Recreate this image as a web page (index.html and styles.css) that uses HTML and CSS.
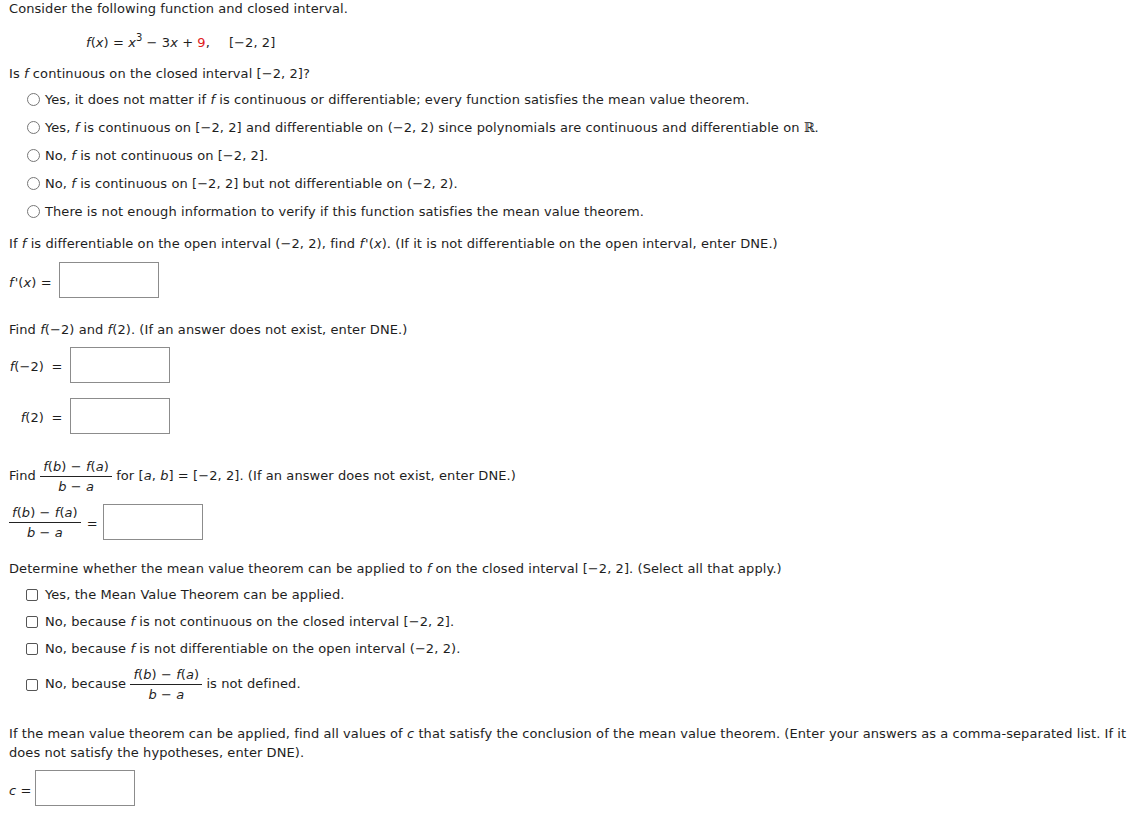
FILE: index.html
```html
<!DOCTYPE html>
<html>
<head>
<meta charset="utf-8">
<link rel="stylesheet" href="styles.css">
</head>
<body>
<div class="page">
  <p class="intro">Consider the following function and closed interval.</p>
  <p class="func"><i>f</i>(<i>x</i>) = <i>x</i><sup>3</sup> − 3<i>x</i> + <span class="red">9</span>,<span class="sp"></span>[−2, 2]</p>
  <p class="q1">Is <i>f</i> continuous on the closed interval [−2, 2]?</p>
  <ul class="choices radios">
    <li><span class="radio"></span>Yes, it does not matter if <i>f</i> is continuous or differentiable; every function satisfies the mean value theorem.</li>
    <li><span class="radio"></span>Yes, <i>f</i> is continuous on [−2, 2] and differentiable on (−2, 2) since polynomials are continuous and differentiable on <span class="bb">ℝ</span>.</li>
    <li><span class="radio"></span>No, <i>f</i> is not continuous on [−2, 2].</li>
    <li><span class="radio"></span>No, <i>f</i> is continuous on [−2, 2] but not differentiable on (−2, 2).</li>
    <li><span class="radio"></span>There is not enough information to verify if this function satisfies the mean value theorem.</li>
  </ul>
  <p class="q2">If <i>f</i> is differentiable on the open interval (−2, 2), find <i>f</i><span class="pr">'</span>(<i>x</i>). (If it is not differentiable on the open interval, enter DNE.)</p>
  <div class="answer a-deriv">
    <span class="lbl"><i>f</i><span class="pr">'</span>(<i>x</i>) =</span>
    <span class="box"></span>
  </div>
  <p class="q3">Find <i>f</i>(−2) and <i>f</i>(2). (If an answer does not exist, enter DNE.)</p>
  <div class="pair">
    <span class="plbl"><i>f</i>(−2)</span><span class="peq">=</span><span class="box"></span>
    <span class="plbl"><i>f</i>(2)</span><span class="peq">=</span><span class="box"></span>
  </div>
  <p class="q4">Find <span class="frac"><span class="num"><i>f</i>(<i>b</i>) − <i>f</i>(<i>a</i>)</span><span class="den"><i>b</i> − <i>a</i></span></span> for [<i>a</i>, <i>b</i>] = [−2, 2]. (If an answer does not exist, enter DNE.)</p>
  <div class="answer a-frac">
    <span class="frac"><span class="num"><i>f</i>(<i>b</i>) − <i>f</i>(<i>a</i>)</span><span class="den"><i>b</i> − <i>a</i></span></span>
    <span class="eq">=</span>
    <span class="box"></span>
  </div>
  <p class="q5">Determine whether the mean value theorem can be applied to <i>f</i> on the closed interval [−2, 2]. (Select all that apply.)</p>
  <ul class="choices checks">
    <li><span class="check"></span>Yes, the Mean Value Theorem can be applied.</li>
    <li><span class="check"></span>No, because <i>f</i> is not continuous on the closed interval [−2, 2].</li>
    <li><span class="check"></span>No, because <i>f</i> is not differentiable on the open interval (−2, 2).</li>
    <li class="fracrow"><span class="check"></span>No, because <span class="frac"><span class="num"><i>f</i>(<i>b</i>) − <i>f</i>(<i>a</i>)</span><span class="den"><i>b</i> − <i>a</i></span></span> is not defined.</li>
  </ul>
  <p class="q6">If the mean value theorem can be applied, find all values of <i>c</i> that satisfy the conclusion of the mean value theorem. (Enter your answers as a comma-separated list. If it does not satisfy the hypotheses, enter DNE).</p>
  <div class="answer a-c">
    <span class="lbl"><i>c</i> =</span>
    <span class="box"></span>
  </div>
</div>
</body>
</html>
```
FILE: styles.css
```css
html, body {
  margin: 0;
  padding: 0;
  background: #fff;
}
.page {
  padding: 0 0 0 9px;
  font-family: "DejaVu Sans", Verdana, sans-serif;
  font-size: 13px;
  color: #1e1e1e;
  line-height: 18px;
  letter-spacing: 0.08px;
}
p { margin: 0; }
i { font-style: italic; }
.pr { margin-left: 1px; }
.intro { margin-top: 0; }
.func { margin: 16px 0 0 77px; }
.func sup { font-size: 10px; line-height: 0; vertical-align: 6px; }
.red { color: #e0201c; }
.sp { display: inline-block; width: 19px; }
.q1 { margin-top: 13px; }
.choices {
  list-style: none;
  margin: 8px 0 0 0;
  padding: 0 0 0 18px;
  display: flex;
  flex-direction: column;
  gap: 10px;
}
.choices li {
  display: block;
  line-height: 18px;
}
.radio {
  display: inline-block;
  box-sizing: border-box;
  width: 13px;
  height: 13px;
  border: 1px solid #777;
  border-radius: 50%;
  background: #fff;
  margin-right: 5px;
  vertical-align: -2px;
}
.bb { font-family: "DejaVu Serif", serif; }
.q2 { margin-top: 14px; }
.answer {
  display: flex;
  align-items: center;
}
.lbl { padding-top: 5px; white-space: nowrap; }
.box {
  display: inline-block;
  box-sizing: border-box;
  width: 100px;
  height: 36px;
  border: 1px solid #8c8c8c;
  background: #fff;
  flex: none;
}
.a-deriv { margin-top: 9px; gap: 7px; }
.q3 { margin-top: 23px; }
.pair {
  margin-top: 8px;
  display: grid;
  grid-template-columns: 35px 26px 100px;
  row-gap: 15px;
  align-items: center;
}
.plbl { text-align: right; white-space: nowrap; padding-top: 4px; }
.peq { text-align: center; padding-top: 4px; }
.q4 { margin-top: 25px; }
.frac {
  display: inline-flex;
  flex-direction: column;
  align-items: center;
  vertical-align: middle;
  line-height: 15px;
}
.frac .num {
  padding: 0 3px 2px;
  border-bottom: 1px solid #222;
}
.frac .den { padding-top: 2px; }
.a-frac { margin-top: 10px; }
.a-frac .eq { margin: 0 5px 0 6px; padding-top: 4px; }
.q5 { margin-top: 20px; }
.checks { margin-top: 8px; gap: 9px; padding-left: 17px; }
.check {
  display: inline-block;
  box-sizing: border-box;
  width: 12px;
  height: 12px;
  border: 1px solid #555;
  border-radius: 2px;
  background: #fff;
  margin-right: 7px;
  vertical-align: -2px;
}
.fracrow .check { vertical-align: middle; }
.q6 { margin-top: 22px; line-height: 19px; padding-right: 10px; }
.a-c { margin-top: 8px; gap: 4px; }
```
